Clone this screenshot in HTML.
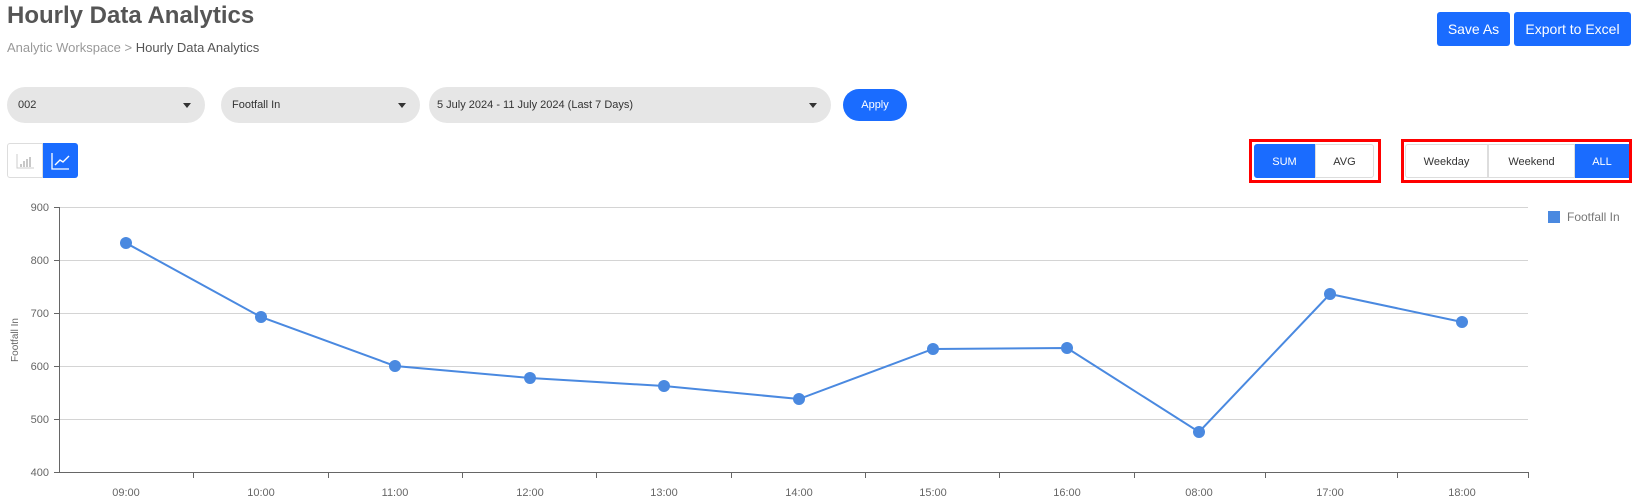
<!DOCTYPE html>
<html><head><style>
*{box-sizing:border-box;margin:0;padding:0}
body{width:1635px;height:504px;background:#fff;font-family:"Liberation Sans",sans-serif;position:relative;overflow:hidden;color:#333}
.a{position:absolute}
.dd{position:absolute;background:#e6e6e6;border-radius:18px;height:36px;top:87px;font-size:11px;color:#333;line-height:36px;padding-left:11px}
.dd:after{content:"";position:absolute;right:14px;top:16px;border-left:4px solid transparent;border-right:4px solid transparent;border-top:5px solid #333}
.btn{position:absolute;background:#1a6cff;color:#fff;border-radius:3px;font-size:14px;text-align:center}
.seg{position:absolute;top:144px;height:34px;line-height:34px;font-size:11px;text-align:center;border:1px solid #ddd;color:#333;background:#fff}
.on{background:#1a6cff;color:#fff;border-color:#1a6cff}
.red{position:absolute;border:3px solid #f00;top:139px;height:44px}
</style></head><body>
<div class="a" style="left:7px;top:2px;font-size:24px;font-weight:bold;color:#555">Hourly Data Analytics</div>
<div class="a" style="left:7px;top:40px;font-size:13px;color:#999">Analytic Workspace &gt; <span style="color:#555">Hourly Data Analytics</span></div>
<div class="btn" style="left:1437px;top:12px;width:73px;height:34px;line-height:34px">Save As</div>
<div class="btn" style="left:1514px;top:12px;width:117px;height:34px;line-height:34px">Export to Excel</div>
<div class="dd" style="left:7px;width:198px">002</div>
<div class="dd" style="left:221px;width:199px">Footfall In</div>
<div class="dd" style="left:429px;width:402px;padding-left:8px">5 July 2024 - 11 July 2024 (Last 7 Days)</div>
<div class="btn" style="left:843px;top:89px;width:64px;height:32px;line-height:32px;border-radius:16px;font-size:11px">Apply</div>
<div class="a" style="left:7px;top:143px;width:36px;height:35px;border:1px solid #ddd;border-radius:3px 0 0 3px">
<svg width="34" height="33"><path d="M9 10v14h17" stroke="#ccc" fill="none"/><path d="M13 20v3M16 17v6M19 15v8M22 13v10" stroke="#bbb" stroke-width="1.6"/></svg></div>
<div class="a" style="left:43px;top:143px;width:35px;height:35px;background:#1a6cff;border-radius:0 3px 3px 0">
<svg width="35" height="35"><path d="M9 10v16h17" stroke="#fff" fill="none" stroke-width="1.3"/><path d="M12 22l5-5 3 2 6-6" stroke="#fff" fill="none" stroke-width="1.4"/></svg></div>
<div class="red" style="left:1249px;width:132px"></div>
<div class="seg on" style="left:1254px;width:61px;border-radius:3px 0 0 3px">SUM</div>
<div class="seg" style="left:1315px;width:59px;border-radius:0 3px 3px 0">AVG</div>
<div class="red" style="left:1401px;width:231px"></div>
<div class="seg" style="left:1405px;width:83px;border-radius:3px 0 0 3px">Weekday</div>
<div class="seg" style="left:1488px;width:87px">Weekend</div>
<div class="seg on" style="left:1575px;width:54px">ALL</div>
<svg class="a" style="left:0;top:0" width="1635" height="504" font-family="Liberation Sans,sans-serif">
<g stroke="#d4d4d4"><path d="M59 207.5H1528M59 260.5H1528M59 313.5H1528M59 366.5H1528M59 419.5H1528"/></g>
<path d="M59.5 207V472.5H1528" stroke="#666" fill="none"/>
<g stroke="#666"><path d="M193.5 472v6M328.5 472v6M462.5 472v6M596.5 472v6M731.5 472v6M865.5 472v6M999.5 472v6M1134.5 472v6M1265.5 472v6M1397.5 472v6M1528.5 472v6M54 207.5h5M54 260.5h5M54 313.5h5M54 366.5h5M54 419.5h5M54 472.5h5"/></g>
<g font-size="11" fill="#666" text-anchor="end"><text x="49" y="211">900</text><text x="49" y="264">800</text><text x="49" y="317">700</text><text x="49" y="370">600</text><text x="49" y="423">500</text><text x="49" y="476">400</text></g>
<text transform="translate(18,340) rotate(-90)" font-size="10" fill="#666" text-anchor="middle">Footfall In</text>
<g font-size="11" fill="#666" text-anchor="middle"><text x="126" y="496">09:00</text><text x="261" y="496">10:00</text><text x="395" y="496">11:00</text><text x="530" y="496">12:00</text><text x="664" y="496">13:00</text><text x="799" y="496">14:00</text><text x="933" y="496">15:00</text><text x="1067" y="496">16:00</text><text x="1199" y="496">08:00</text><text x="1330" y="496">17:00</text><text x="1462" y="496">18:00</text></g>
<polyline fill="none" stroke="#4a89e0" stroke-width="2" points="126,243 261,317 395,366 530,378 664,386 799,399 933,349 1067,348 1199,432 1330,294 1462,322"/>
<g fill="#4a89e0"><circle cx="126" cy="243" r="6"/><circle cx="261" cy="317" r="6"/><circle cx="395" cy="366" r="6"/><circle cx="530" cy="378" r="6"/><circle cx="664" cy="386" r="6"/><circle cx="799" cy="399" r="6"/><circle cx="933" cy="349" r="6"/><circle cx="1067" cy="348" r="6"/><circle cx="1199" cy="432" r="6"/><circle cx="1330" cy="294" r="6"/><circle cx="1462" cy="322" r="6"/></g>
<rect x="1548" y="211" width="12" height="12" fill="#4a89e0"/>
<text x="1567" y="221" font-size="12" fill="#777">Footfall In</text>
</svg>
</body></html>
